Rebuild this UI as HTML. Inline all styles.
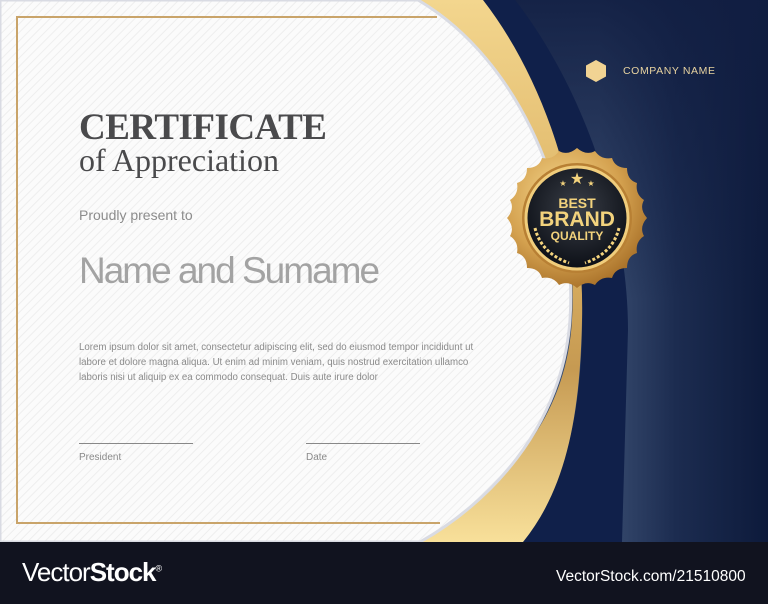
<!DOCTYPE html>
<html><head><meta charset="utf-8"><style>
body{margin:0;width:768px;height:604px;overflow:hidden;background:#fff;font-family:"Liberation Sans",sans-serif;position:relative}
.t{position:absolute;white-space:nowrap}
</style></head><body>
<svg width="768" height="604" style="position:absolute;left:0;top:0">
<defs>
<linearGradient id="nv" x1="0" y1="0" x2="1" y2="0"><stop offset="0" stop-color="#2f4368"/><stop offset="0.78" stop-color="#3a4e72"/><stop offset="0.88" stop-color="#1c2c50"/><stop offset="1" stop-color="#0d1a3b"/></linearGradient>
<linearGradient id="nt" x1="0" y1="0" x2="0" y2="1"><stop offset="0" stop-color="#111e42" stop-opacity="0.9"/><stop offset="1" stop-color="#111e42" stop-opacity="0"/></linearGradient>
<linearGradient id="gd" x1="0" y1="0" x2="0" y2="1"><stop offset="0" stop-color="#f3d68e"/><stop offset="0.45" stop-color="#dcb263"/><stop offset="0.68" stop-color="#c69a52"/><stop offset="1" stop-color="#f8e09a"/></linearGradient>
<radialGradient id="bg" cx="0.4" cy="0.35" r="0.7"><stop offset="0" stop-color="#f6d98f"/><stop offset="0.6" stop-color="#d4a14f"/><stop offset="1" stop-color="#a56d26"/></radialGradient>
<radialGradient id="bk" cx="0.5" cy="0.4" r="0.6"><stop offset="0" stop-color="#3a3f48"/><stop offset="1" stop-color="#0c0f16"/></radialGradient>
<pattern id="ln" width="6" height="6" patternUnits="userSpaceOnUse" patternTransform="rotate(45)"><rect width="6" height="6" fill="#fbfbfb"/><rect width="1" height="6" fill="#eeeeee"/></pattern>
</defs>
<rect x="0" y="0" width="768" height="542" fill="url(#nv)"/>
<rect x="0" y="0" width="768" height="300" fill="url(#nt)"/>
<path d="M478,0 L515,0 C585,90 628,220 628,330 L622,542 L515,542 C560,500 580,430 582,330 C585,200 545,80 478,0Z" fill="#10204a"/>
<path d="M400,0 L483,0 C545,80 585,200 582,320 C580,420 565,490 523,542 L410,542 C490,500 566,430 572,320 C580,200 520,60 420,0 Z" fill="url(#gd)"/>
<path d="M0,0 L418,0 C520,60 578,200 570,320 C562,430 486,505 420,542 L0,542 Z" fill="url(#ln)"/>
<path d="M0,0 L418,0 C520,60 578,200 570,320 C562,430 486,505 420,542 L0,542 Z" fill="none" stroke="#d9dbe3" stroke-width="3"/>
<path d="M437,17 L17,17 L17,523 L440,523" fill="none" stroke="#c9a46a" stroke-width="2"/>
<rect x="0" y="542" width="768" height="62" fill="#11131f"/>
<polygon points="596,60 606,65.5 606,76.5 596,82 586,76.5 586,65.5" fill="#f1d393"/>
<g transform="translate(577,218)">
<path d="M0,-70 Q9,-62 18,-67 Q24,-58 35,-60 Q38,-50 50,-50 Q50,-38 60,-35 Q58,-24 67,-18 Q62,-9 70,0 Q62,9 67,18 Q58,24 60,35 Q50,38 50,50 Q38,50 35,60 Q24,58 18,67 Q9,62 0,70 Q-9,62 -18,67 Q-24,58 -35,60 Q-38,50 -50,50 Q-50,38 -60,35 Q-58,24 -67,18 Q-62,9 -70,0 Q-62,-9 -67,-18 Q-58,-24 -60,-35 Q-50,-38 -50,-50 Q-38,-50 -35,-60 Q-24,-58 -18,-67 Q-9,-62 0,-70Z" fill="url(#bg)"/>
<circle r="55" fill="#b88034"/>
<circle r="51" fill="url(#bk)" stroke="#f0cd7c" stroke-width="3"/>
<text x="0" y="-34" text-anchor="middle" fill="#f3d37d" font-size="16">★</text>
<text x="-14" y="-32" text-anchor="middle" fill="#f3d37d" font-size="8">★</text>
<text x="14" y="-32" text-anchor="middle" fill="#f3d37d" font-size="8">★</text>
<text x="0" y="-10" text-anchor="middle" fill="#f3d37d" font-size="14" font-weight="bold" font-family="Liberation Sans Narrow,Liberation Sans,sans-serif">BEST</text>
<text x="0" y="8" text-anchor="middle" fill="#f3d37d" font-size="21" font-weight="bold" font-family="Liberation Sans Narrow,Liberation Sans,sans-serif">BRAND</text>
<text x="0" y="22" text-anchor="middle" fill="#f3d37d" font-size="12" font-weight="bold" font-family="Liberation Sans Narrow,Liberation Sans,sans-serif">QUALITY</text>
<path d="M-42,10 Q-36,35 -8,45 M42,10 Q36,35 8,45" fill="none" stroke="#f3d37d" stroke-width="3" stroke-dasharray="3 2"/>
</g>
</svg>
<div class="t" style="left:623px;top:65px;color:#e8d3a0;font-size:10.5px;letter-spacing:0.6px;font-family:'Liberation Sans Narrow','Liberation Sans',sans-serif">COMPANY NAME</div>
<div class="t" style="left:79px;top:106px;font-family:'Liberation Serif',serif;font-weight:bold;font-size:37px;color:#4a4a4c;letter-spacing:-0.5px">CERTIFICATE</div>
<div class="t" style="left:79px;top:142px;font-family:'Liberation Serif',serif;font-size:32px;color:#4a4a4c">of Appreciation</div>
<div class="t" style="left:79px;top:207px;font-size:14px;color:#8c8c8c">Proudly present to</div>
<div class="t" style="left:79px;top:250px;font-size:37px;color:#a3a3a3;letter-spacing:-2px">Name and Sumame</div>
<div class="t" style="left:79px;top:340px;font-size:9.7px;line-height:15px;color:#8a8a8a">Lorem ipsum dolor sit amet, consectetur adipiscing elit, sed do eiusmod tempor incididunt ut<br>labore et dolore magna aliqua. Ut enim ad minim veniam, quis nostrud exercitation ullamco<br>laboris nisi ut aliquip ex ea commodo consequat. Duis aute irure dolor</div>
<div style="position:absolute;left:79px;top:443px;width:114px;height:1px;background:#888"></div>
<div style="position:absolute;left:306px;top:443px;width:114px;height:1px;background:#888"></div>
<div class="t" style="left:79px;top:452px;font-size:10px;color:#8a8a8a">President</div>
<div class="t" style="left:306px;top:452px;font-size:10px;color:#8a8a8a">Date</div>
<div class="t" style="left:22px;top:557px;font-size:26px;color:#fff;letter-spacing:-1px">Vector<b>Stock</b><sup style="font-size:9px">®</sup></div>
<div class="t" style="left:556px;top:568px;font-size:15.5px;color:#fff">VectorStock.com/21510800</div>
</body></html>
